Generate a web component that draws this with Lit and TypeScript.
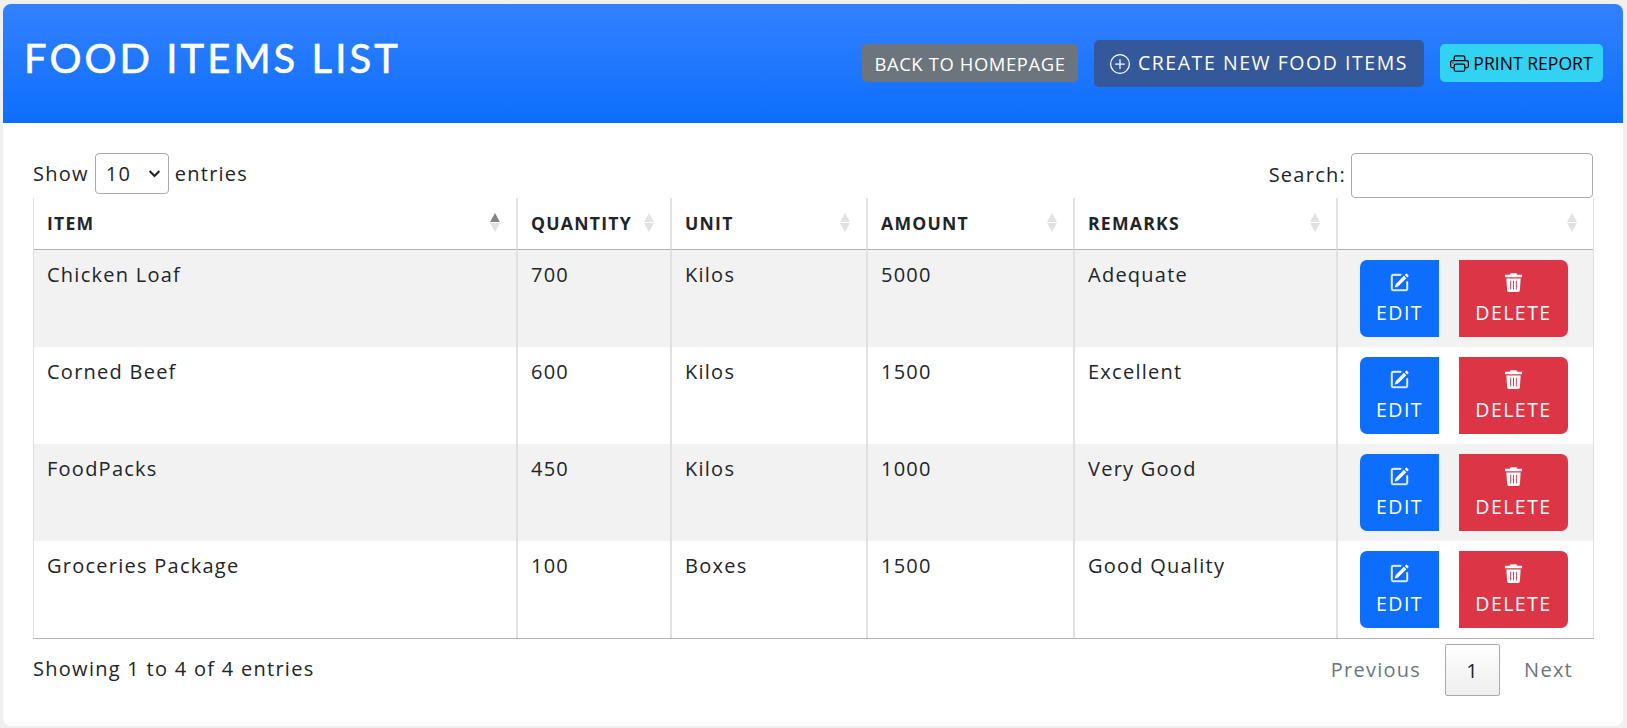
import { LitElement, html, css, svg } from "lit";
import { customElement } from "lit/decorators.js";

const rows = [
  ["Chicken Loaf", "700", "Kilos", "5000", "Adequate"],
  ["Corned Beef", "600", "Kilos", "1500", "Excellent"],
  ["FoodPacks", "450", "Kilos", "1000", "Very Good"],
  ["Groceries Package", "100", "Boxes", "1500", "Good Quality"],
];
const heads = ["Item", "Quantity", "Unit", "Amount", "Remarks", ""];

const plus = svg`<path d="M8 15A7 7 0 1 1 8 1a7 7 0 0 1 0 14zm0 1A8 8 0 1 0 8 0a8 8 0 0 0 0 16z"/><path d="M8 4a.5.5 0 0 1 .5.5v3h3a.5.5 0 0 1 0 1h-3v3a.5.5 0 0 1-1 0v-3h-3a.5.5 0 0 1 0-1h3v-3A.5.5 0 0 1 8 4z"/>`;
const printer = svg`<path d="M2.5 8a.5.5 0 1 0 0-1 .5.5 0 0 0 0 1z"/><path d="M5 1a2 2 0 0 0-2 2v2H2a2 2 0 0 0-2 2v3a2 2 0 0 0 2 2h1v1a2 2 0 0 0 2 2h6a2 2 0 0 0 2-2v-1h1a2 2 0 0 0 2-2V7a2 2 0 0 0-2-2h-1V3a2 2 0 0 0-2-2H5zM4 3a1 1 0 0 1 1-1h6a1 1 0 0 1 1 1v2H4V3zm1 5a2 2 0 0 0-2 2v1H2a1 1 0 0 1-1-1V7a1 1 0 0 1 1-1h12a1 1 0 0 1 1 1v3a1 1 0 0 1-1 1h-1v-1a2 2 0 0 0-2-2H5zm7 2v3a1 1 0 0 1-1 1H5a1 1 0 0 1-1-1v-3a1 1 0 0 1 1-1h6a1 1 0 0 1 1 1z"/>`;
const edit = svg`<path d="M15.502 1.94a.5.5 0 0 1 0 .706L14.459 3.69l-2-2L13.502.646a.5.5 0 0 1 .707 0l1.293 1.293zm-1.75 2.456-2-2L4.939 9.21a.5.5 0 0 0-.121.196l-.805 2.414a.25.25 0 0 0 .316.316l2.414-.805a.5.5 0 0 0 .196-.12l6.813-6.814z"/><path fill-rule="evenodd" stroke="currentColor" stroke-width=".5" d="M1 13.5A1.5 1.5 0 0 0 2.5 15h11a1.5 1.5 0 0 0 1.5-1.5v-6a.5.5 0 0 0-1 0v6a.5.5 0 0 1-.5.5h-11a.5.5 0 0 1-.5-.5v-11a.5.5 0 0 1 .5-.5H9a.5.5 0 0 0 0-1H2.5A1.5 1.5 0 0 0 1 2.5v11z"/>`;
const trash = svg`<path d="M5.5 0.3h5l.6 1.2H15.2v2.1H.8V1.5h4.1z"/><path fill-rule="evenodd" d="M2 4.6h12l-.6 10a1.5 1.5 0 0 1-1.5 1.3H4.1a1.5 1.5 0 0 1-1.5-1.3zM5.2 6.6v7.3h.8V6.6zM7.6 6.6v7.3h.8V6.6zM10 6.6v7.3h.8V6.6z"/>`;

@customElement("app-root")
export class AppRoot extends LitElement {
  static styles = css`
    :host {
      display: block;
      height: 728px;
      box-sizing: border-box;
      padding: 4px 4px 2px 3px;
      background: #f0f0f0;
      font-family: "Open Sans", sans-serif;
      font-size: 20px;
      letter-spacing: 1.25px;
      color: #212529;
    }
    * { box-sizing: border-box; }
    .card {
      height: 100%;
      background: #fff;
      border-radius: 8px;
      overflow: hidden;
      display: flex;
      flex-direction: column;
    }
    .head {
      height: 119px;
      flex: none;
      background: linear-gradient(#3381ff, #0d6efd);
      display: flex;
      align-items: flex-start;
      padding: 36px 20px 0 21px;
      gap: 15px;
    }
    h1 {
      margin: -5px auto 0 0;
      font: 400 40px/46px Lato, sans-serif;
      letter-spacing: 3.05px;
      color: #fff;
      -webkit-text-stroke: 0.6px #fff;
    }
    .hbtn {
      display: inline-flex;
      align-items: center;
      justify-content: center;
      border-radius: 5px;
      color: #fff;
      white-space: nowrap;
    }
    .back { width: 216px; height: 38px; margin: 4px 1px 0 0; background: #6c757d; font-size: 18.4px; letter-spacing: .62px; }
    .create { width: 330px; height: 47px; padding-bottom: 2px; background: #35589a; font-size: 19.5px; letter-spacing: 1.55px; gap: 8px; }
    .create svg { width: 20px; height: 20px; margin-top: 2px; }
    .print { width: 163px; height: 38px; margin: 4px 0 0 1px; background: #31d2f2; color: #000; font-size: 17.6px; letter-spacing: 0; gap: 4px; }
    .print svg { width: 19px; height: 19px; }
    svg { fill: currentColor; display: block; }
    .body { padding: 30px 30px 0 30px; flex: 1; }
    .controls {
      height: 45px;
      display: flex;
      justify-content: space-between;
      align-items: flex-start;
    }
    .len, .search { display: flex; align-items: center; gap: 6px; height: 41px; }
    .search { height: 43px; gap: 5px; align-items: center; }
    .sel {
      width: 74px;
      height: 41px;
      border: 1px solid #aaa;
      border-radius: 4px;
      display: flex;
      align-items: center;
      justify-content: space-between;
      padding: 0 7px 0 10px;
      background: #fff;
    }
    .sel svg { width: 13px; height: 13px; fill: none; stroke: #222; stroke-width: 2.6; }
    .inp { width: 242px; height: 45px; margin-bottom: -2px; border: 1px solid #aaa; border-radius: 4px; background: #fff; }
    table {
      width: calc(100% - 2px);
      table-layout: fixed;
      border-collapse: separate;
      border-spacing: 0;
      border-left: 1px solid #dee2e6;
      border-right: 1px solid #dee2e6;
      border-bottom: 1px solid #b4b4b4;
    }
    th {
      height: 52px;
      padding: 0 13px 2px;
      text-align: left;
      font-size: 17.6px;
      font-weight: 700;
      text-transform: uppercase;
      border-bottom: 1px solid #b4b4b4;
      color: #212529;
    }
    th .in { display: flex; align-items: center; justify-content: space-between; }
    th + th, td + td { border-left: 2px solid #dee2e6; }
    td { height: 97px; padding: 11px 13px 9px; vertical-align: top; }
    tbody tr:nth-child(odd) td { background: #f2f2f2; }
    .sort { display: flex; flex-direction: column; gap: 1px; margin-right: 3px; }
    .tri { width: 10px; height: 9px; clip-path: polygon(50% 0, 100% 100%, 0 100%); background: #e2e2e2; }
    .tri.down { transform: scaleY(-1); }
    .tri.on { background: #858585; }
    td.act { padding: 10px 0 0 22px; }
    .btns { display: flex; gap: 20px; }
    .btn {
      height: 77px;
      color: #fff;
      display: flex;
      flex-direction: column;
      align-items: center;
      padding-top: 13px;
      letter-spacing: 1.45px;
      font-size: 19.5px;
      line-height: 27px;
      gap: 7px;
    }
    .btn svg { width: 19px; height: 19px; }
    .e { width: 79px; background: #0d6efd; border-radius: 7px 0 0 7px; }
    .d { width: 109px; background: #dc3545; border-radius: 0 7px 7px 0; }
    .foot {
      display: flex;
      justify-content: space-between;
      align-items: flex-start;
      padding-top: 5px;
    }
    .info { padding-top: 11px; letter-spacing: 1.28px; }
    .pages { display: flex; align-items: center; color: #6c757d; padding-right: 20px; gap: 24px; height: 52px; }
    .pages > span { padding-bottom: 2px; }
    .cur {
      width: 55px;
      height: 52px;
      display: flex;
      align-items: center;
      justify-content: center;
      border: 1px solid #aaa;
      border-radius: 2px;
      background: linear-gradient(#fff, #eee);
      color: #212529;
    }
  `;

  render() {
    const widths = [482, 154, 196, 207, 263, 257];
    return html`
      <div class="card">
        <div class="head">
          <h1>FOOD ITEMS LIST</h1>
          <div class="hbtn back">BACK TO HOMEPAGE</div>
          <div class="hbtn create"><svg viewBox="0 0 16 16">${plus}</svg>CREATE NEW FOOD ITEMS</div>
          <div class="hbtn print"><svg viewBox="0 0 16 16">${printer}</svg>PRINT REPORT</div>
        </div>
        <div class="body">
          <div class="controls">
            <div class="len">Show
              <div class="sel">10<svg viewBox="0 0 16 16"><path d="M2 5l6 6 6-6"/></svg></div>
              entries</div>
            <div class="search">Search: <div class="inp"></div></div>
          </div>
          <table>
            <colgroup>${widths.map((w) => html`<col style="width:${w}px" />`)}</colgroup>
            <thead>
              <tr>
                ${heads.map(
                  (h, i) => html`<th><div class="in"><span>${h}</span>
                    <span class="sort"><span class="tri ${i === 0 ? "on" : ""}"></span><span class="tri down"></span></span></div></th>`
                )}
              </tr>
            </thead>
            <tbody>
              ${rows.map(
                (r) => html`<tr>
                  ${r.map((c) => html`<td>${c}</td>`)}
                  <td class="act">
                    <div class="btns">
                      <div class="btn e"><svg viewBox="0 0 16 16">${edit}</svg>EDIT</div>
                      <div class="btn d"><svg viewBox="0 0 16 16">${trash}</svg>DELETE</div>
                    </div>
                  </td>
                </tr>`
              )}
            </tbody>
          </table>
          <div class="foot">
            <div class="info">Showing 1 to 4 of 4 entries</div>
            <div class="pages"><span>Previous</span><div class="cur">1</div><span>Next</span></div>
          </div>
        </div>
      </div>
    `;
  }
}
